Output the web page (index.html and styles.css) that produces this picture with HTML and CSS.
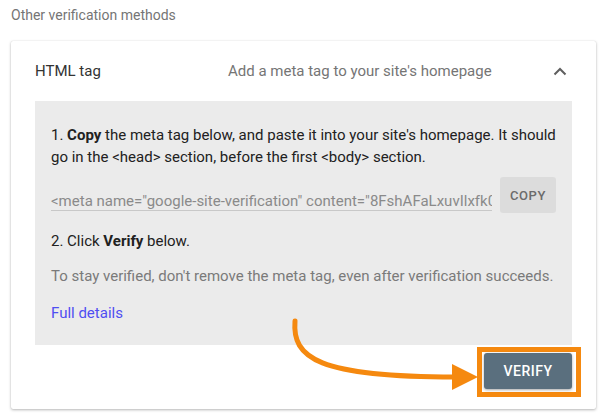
FILE: index.html
```html
<!DOCTYPE html>
<html>
<head>
<meta charset="utf-8">
<link rel="stylesheet" href="styles.css">
</head>
<body>
<div class="page">
  <div class="section-title">Other verification methods</div>
  <div class="card">
    <div class="card-header">
      <div class="method">HTML tag</div>
      <div class="method-desc">Add a meta tag to your site's homepage</div>
      <svg class="chevron" width="14" height="9" viewBox="0 0 14 9"><path d="M1.5 7.5 L7 2 L12.5 7.5" fill="none" stroke="#5f5f5f" stroke-width="2"/></svg>
    </div>
    <div class="panel">
      <p class="step">1. <b>Copy</b> the meta tag below, and paste it into your site's homepage. It should go in the &lt;head&gt; section, before the first &lt;body&gt; section.</p>
      <div class="copy-row">
        <div class="meta-input">&lt;meta name="google-site-verification" content="8FshAFaLxuvIlxfk0NbRz2hQvAhJ1UqPx" /&gt;</div>
        <button class="copy-btn">COPY</button>
      </div>
      <p class="step step2">2. Click <b>Verify</b> below.</p>
      <p class="note">To stay verified, don't remove the meta tag, even after verification succeeds.</p>
      <a class="link">Full details</a>
    </div>
    <div class="card-footer">
      <span class="highlight"><button class="verify-btn">VERIFY</button></span>
    </div>
  </div>
  <svg class="arrow" width="604" height="415" viewBox="0 0 604 415">
    <path d="M295 321 C 292 358, 318 377, 455 377" fill="none" stroke="#f5890f" stroke-width="5" stroke-linecap="round"/>
    <polygon points="452,364 478,377 452,390" fill="#f5890f"/>
  </svg>
</div>
</body>
</html>
```
FILE: styles.css
```css
* { box-sizing: border-box; }
html, body { margin: 0; padding: 0; background: #fff; }
body { font-family: Roboto, "Noto Sans", "Liberation Sans", sans-serif; color: #212121; }
.page { position: relative; width: 604px; height: 415px; overflow: hidden; }
.section-title { font-size: 14px; color: #757575; padding: 6px 0 0 11px; line-height: 18px; height: 41px; }
.card {
  margin-left: 11px;
  width: 585px;
  height: 368px;
  background: #fff;
  border-radius: 2px;
  box-shadow: 0 1px 3px rgba(0,0,0,0.28), 0 0 1px rgba(0,0,0,0.15);
  padding: 0 24px;
}
.card-header { height: 60px; display: flex; align-items: center; }
.method { font-size: 15px; color: #333; width: 193px; }
.method-desc { font-size: 15px; color: #757575; flex: 1; }
.chevron { margin-right: 5px; }
.panel { background: #ebebeb; height: 244px; padding: 23px 16px 0 16px; }
.step { margin: 0; font-size: 15px; line-height: 22px; color: #212121; }
.step b { font-weight: 700; }
.copy-row { display: flex; align-items: flex-start; margin-top: 9px; gap: 8px; }
.meta-input {
  width: 441px; font-size: 15px; color: #8a8a8a; white-space: nowrap; overflow: hidden;
  border-bottom: 1px solid #c8c8c8; line-height: 20px; padding-top: 14px; height: 34px;
}
.copy-btn {
  width: 56px; height: 36px; border: none; border-radius: 3px; background: #dcdcdc;
  color: #6b6b6b; font-family: inherit; font-size: 13px; font-weight: 500; letter-spacing: 0.6px; padding: 0;
}
.step2 { margin-top: 17px; }
.note { margin: 13px 0 0; font-size: 15px; line-height: 22px; color: #7a7a7a; }
.link { display: block; margin-top: 15px; font-size: 15px; line-height: 22px; color: #4f4ff2; }
.card-footer { display: flex; justify-content: flex-end; margin-right: -9px; padding-top: 2px; }
.highlight { display: inline-block; border: 5px solid #f5890f; padding: 1px 4px 3px 2px; line-height: 0; }
.verify-btn {
  width: 88px; height: 36px; border: none; border-radius: 3px; background: #5a6f7e; color: #fff;
  font-family: inherit; font-size: 14px; font-weight: 500; letter-spacing: 0.5px; padding: 0;
  box-shadow: 0 1px 3px rgba(0,0,0,0.35);
}
.arrow { position: absolute; left: 0; top: 0; pointer-events: none; }
```
